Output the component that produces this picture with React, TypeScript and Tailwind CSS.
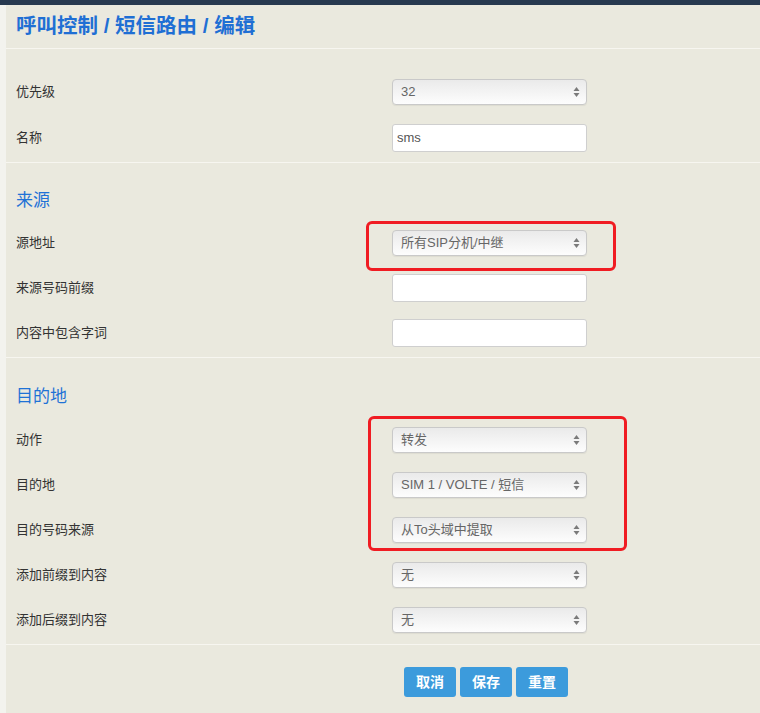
import React from "react";

const FONT = { fontFamily: '"Helvetica Neue", "Liberation Sans", "Noto Sans CJK SC", sans-serif' };

function Arrows() {
  return (
    <svg width="7" height="12" viewBox="0 0 7 12" className="shrink-0">
      <path d="M3.5 1 L6.5 5 L0.5 5 Z" fill="#7a7a7a" />
      <path d="M3.5 11 L6.5 7 L0.5 7 Z" fill="#7a7a7a" />
    </svg>
  );
}

function SelectBox({ value }: { value: string }) {
  return (
    <div className="flex h-[26px] w-[195px] items-center justify-between rounded-[4px] border border-[#c9c9c9] bg-[linear-gradient(#eaeaea,#fdfdfd)] pl-[8px] pr-[6px] text-[13px] text-[#666] shadow-[0_1px_1px_rgba(0,0,0,0.06)]">
      <span>{value}</span>
      <Arrows />
    </div>
  );
}

function TextBox({ value }: { value?: string }) {
  return (
    <div className="flex h-[28px] w-[195px] items-center rounded-[3px] border border-[#cfcfcf] bg-white px-[4px] text-[13px] text-[#555]">
      {value}
    </div>
  );
}

function Row({ label, children }: { label: string; children: React.ReactNode }) {
  return (
    <div className="flex h-[45px] items-center">
      <div className="w-[376px] text-[13px] text-[#333]">{label}</div>
      {children}
    </div>
  );
}

function Heading({ children }: { children: React.ReactNode }) {
  return <div className="mb-[4px] flex h-[30px] items-center text-[17px] text-[#1f72d6]">{children}</div>;
}

function Divider() {
  return <div className="h-px bg-[#f7f6f0]" />;
}

export default function App() {
  return (
    <div className="min-h-[713px] w-[760px] bg-[#f3f3ee]" style={FONT}>
      <div className="h-[5px] bg-[#27394f]" />
      <div className="relative ml-[6px] min-h-[708px] bg-[#eae9de]">
        <div className="flex h-[43px] items-center px-[10px] text-[20.5px] font-bold text-[#1f6fd4]">
          呼叫控制 / 短信路由 / 编辑
        </div>
        <Divider />
        <div className="px-[10px] pb-[2px] pt-[20px]">
          <Row label="优先级">
            <SelectBox value="32" />
          </Row>
          <div className="pt-px">
            <Row label="名称">
              <TextBox value="sms" />
            </Row>
          </div>
        </div>
        <Divider />
        <div className="px-[10px] pb-[2px] pt-[23px]">
          <Heading>来源</Heading>
          <Row label="源地址">
            <SelectBox value="所有SIP分机/中继" />
          </Row>
          <Row label="来源号码前缀">
            <TextBox />
          </Row>
          <Row label="内容中包含字词">
            <TextBox />
          </Row>
        </div>
        <Divider />
        <div className="px-[10px] pb-[2px] pt-[24px]">
          <Heading>目的地</Heading>
          <div className="pt-px">
            <Row label="动作">
              <SelectBox value="转发" />
            </Row>
            <Row label="目的地">
              <SelectBox value="SIM 1 / VOLTE / 短信" />
            </Row>
            <Row label="目的号码来源">
              <SelectBox value="从To头域中提取" />
            </Row>
            <Row label="添加前缀到内容">
              <SelectBox value="无" />
            </Row>
            <Row label="添加后缀到内容">
              <SelectBox value="无" />
            </Row>
          </div>
        </div>
        <Divider />
        <div className="flex gap-[4px] pl-[398px] pt-[22px]">
          {["取消", "保存", "重置"].map((t) => (
            <button
              key={t}
              className="h-[30px] w-[52px] rounded-[3px] bg-[#3c9bdc] text-[14px] font-bold text-white"
            >
              {t}
            </button>
          ))}
        </div>

        <div className="pointer-events-none absolute left-[360px] top-[216px] h-[50px] w-[250px] rounded-[6px] border-[3px] border-[#f01c22]" />
        <div className="pointer-events-none absolute left-[362px] top-[411px] h-[135px] w-[259px] rounded-[6px] border-[3px] border-[#f01c22]" />
      </div>
    </div>
  );
}
